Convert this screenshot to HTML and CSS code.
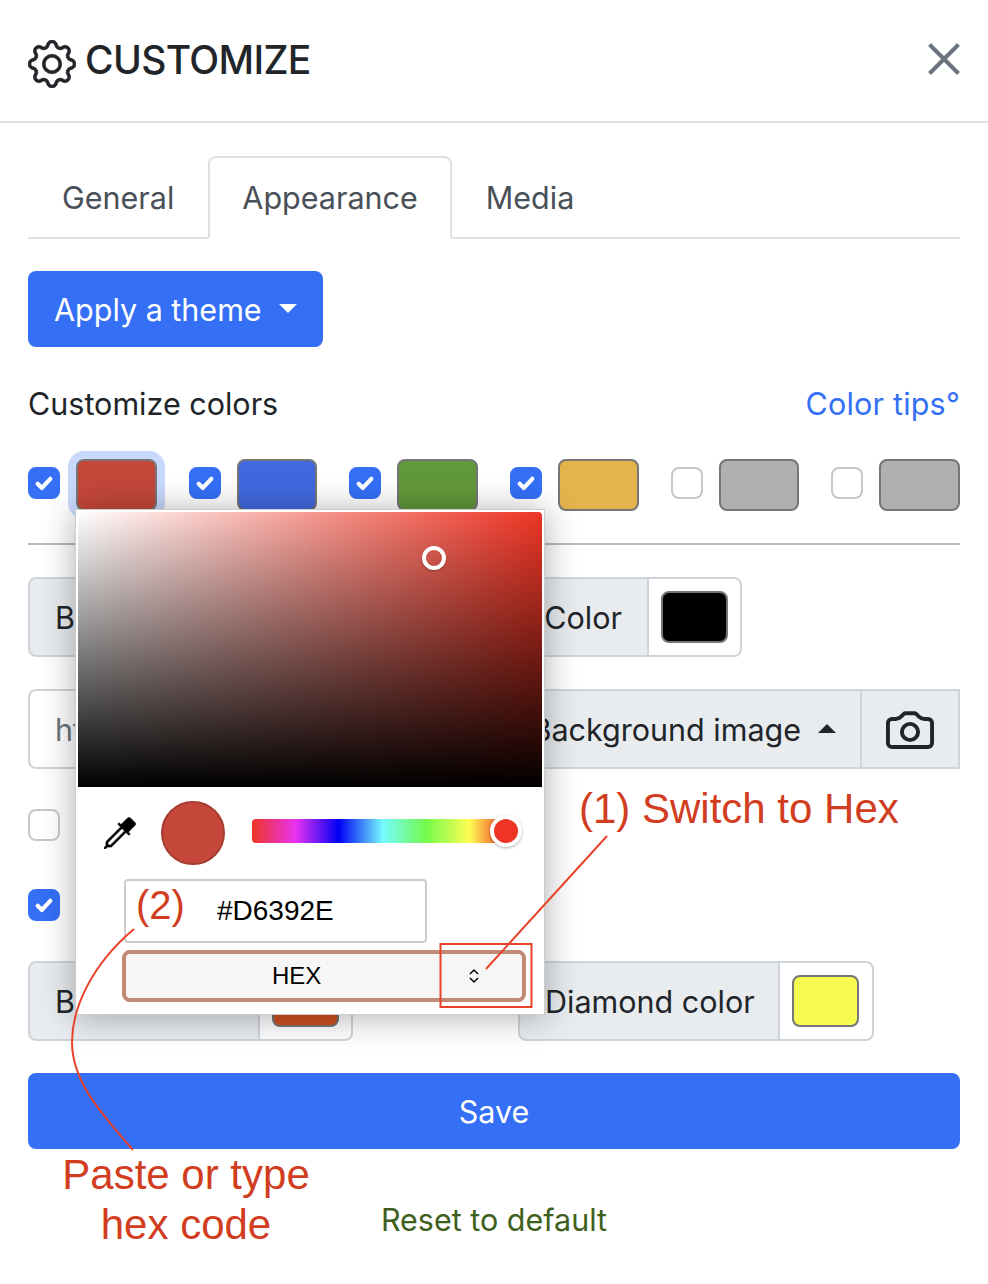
FILE: index.html
```html
<!DOCTYPE html>
<html lang="en">
<head>
  <meta charset="UTF-8" />
  <meta name="viewport" content="width=device-width, initial-scale=1.0"/>
  <title>Customize</title>
  <link rel="stylesheet" href="styles.css">
</head>
<body>
<div class="page">
  <header class="head">
    <svg class="gear" viewBox="0 0 16 16" fill="currentColor" stroke="currentColor" stroke-width="0.2">
      <path d="M8 4.754a3.246 3.246 0 1 0 0 6.492 3.246 3.246 0 0 0 0-6.492zM5.754 8a2.246 2.246 0 1 1 4.492 0 2.246 2.246 0 0 1-4.492 0z"/>
      <path d="M9.796 1.343c-.527-1.79-3.065-1.79-3.592 0l-.094.319a.873.873 0 0 1-1.255.52l-.292-.16c-1.64-.892-3.433.902-2.54 2.541l.159.292a.873.873 0 0 1-.52 1.255l-.319.094c-1.79.527-1.79 3.065 0 3.592l.319.094a.873.873 0 0 1 .52 1.255l-.16.292c-.892 1.64.901 3.434 2.541 2.54l.292-.159a.873.873 0 0 1 1.255.52l.094.319c.527 1.79 3.065 1.79 3.592 0l.094-.319a.873.873 0 0 1 1.255-.52l.292.16c1.64.893 3.434-.902 2.54-2.541l-.159-.292a.873.873 0 0 1 .52-1.255l.319-.094c1.79-.527 1.79-3.065 0-3.592l-.319-.094a.873.873 0 0 1-.52-1.255l.16-.292c.893-1.64-.902-3.433-2.541-2.54l-.292.159a.873.873 0 0 1-1.255-.52l-.094-.319zm-2.633.283c.246-.835 1.428-.835 1.674 0l.094.319a1.873 1.873 0 0 0 2.693 1.115l.291-.16c.764-.415 1.6.42 1.184 1.185l-.159.292a1.873 1.873 0 0 0 1.116 2.692l.318.094c.835.246.835 1.428 0 1.674l-.319.094a1.873 1.873 0 0 0-1.115 2.693l.16.291c.415.764-.42 1.6-1.185 1.184l-.291-.159a1.873 1.873 0 0 0-2.693 1.116l-.094.318c-.246.835-1.428.835-1.674 0l-.094-.319a1.873 1.873 0 0 0-2.692-1.115l-.292.16c-.764.415-1.6-.42-1.184-1.185l.159-.291A1.873 1.873 0 0 0 1.945 8.93l-.319-.094c-.835-.246-.835-1.428 0-1.674l.319-.094A1.873 1.873 0 0 0 3.06 4.377l-.16-.292c-.415-.764.42-1.6 1.185-1.184l.292.159a1.873 1.873 0 0 0 2.692-1.115l.094-.319z"/>
    </svg>
    <h1 class="title">CUSTOMIZE</h1>
    <svg class="close" viewBox="0 0 32 32"><path d="M1.5 1.5l29 29M30.500 1.500l-29 29"/></svg>
  </header>

  <main class="content">
    <nav class="tabs">
      <a class="tab">General</a>
      <a class="tab active">Appearance</a>
      <a class="tab">Media</a>
    </nav>

    <button class="btn theme-btn" type="button">Apply a theme<span class="caret"></span></button>

    <div class="colors-head">
      <span>Customize colors</span>
      <a class="tips">Color tips°</a>
    </div>

    <div class="swatch-row">
      <div class="swatch-item">
        <span class="check on"><svg viewBox="0 0 20 20"><path d="m5.500 10.500 3 3 6-6.500"/></svg></span>
        <span class="swatch focused red"></span>
      </div>
      <div class="swatch-item">
        <span class="check on"><svg viewBox="0 0 20 20"><path d="m5.500 10.500 3 3 6-6.500"/></svg></span>
        <span class="swatch blue"></span>
      </div>
      <div class="swatch-item">
        <span class="check on"><svg viewBox="0 0 20 20"><path d="m5.500 10.500 3 3 6-6.500"/></svg></span>
        <span class="swatch green"></span>
      </div>
      <div class="swatch-item">
        <span class="check on"><svg viewBox="0 0 20 20"><path d="m5.500 10.500 3 3 6-6.500"/></svg></span>
        <span class="swatch gold"></span>
      </div>
      <div class="swatch-item">
        <span class="check"></span>
        <span class="swatch grey"></span>
      </div>
      <div class="swatch-item">
        <span class="check"></span>
        <span class="swatch grey"></span>
      </div>
    </div>

    <hr class="rule">

    <div class="field-row first">
      <div class="color-group">
        <span class="group-label wide">Background</span>
        <span class="group-cell"><span class="swatch small white"></span></span>
      </div>
      <div class="color-group push">
        <span class="group-label">Text Color</span>
        <span class="group-cell"><span class="swatch small black"></span></span>
      </div>
    </div>

    <div class="image-row">
      <input class="image-input" type="text" value="https://example.com/image.jpg" readonly>
      <span class="group-label image-btn">Background image<span class="caret up"></span></span>
      <span class="group-label camera-btn">
        <svg class="camera" viewBox="0 0 16 16">
          <path d="M2 4.650h1.170a2.650 2.650 0 0 0 1.870-.780l.830-.830a1 1 0 0 1 .700-.290h2.860a1 1 0 0 1 .700.290l.830.830a2.650 2.650 0 0 0 1.870.780H14a1.350 1.350 0 0 1 1.350 1.350v6.650a1.350 1.350 0 0 1-1.350 1.350H2a1.350 1.350 0 0 1-1.350-1.350V6A1.350 1.350 0 0 1 2 4.650z"/>
          <circle cx="8" cy="9" r="2.700"/>
        </svg>
      </span>
    </div>

    <div class="check-row"><span class="check"></span></div>
    <div class="check-row second"><span class="check on"><svg viewBox="0 0 20 20"><path d="m5.500 10.500 3 3 6-6.500"/></svg></span></div>

    <div class="field-row last">
      <div class="color-group">
        <span class="group-label wide">Bars color</span>
        <span class="group-cell"><span class="swatch small orange"></span></span>
      </div>
      <div class="color-group diamond">
        <span class="group-label">Diamond color</span>
        <span class="group-cell"><span class="swatch small yellow"></span></span>
      </div>
    </div>

    <button class="btn save-btn" type="button">Save</button>
    <a class="reset">Reset to default</a>
  </main>

  <!-- colour picker popup -->
  <div class="picker">
    <div class="picker-area"><span class="picker-dot"></span></div>
    <div class="picker-controls">
      <svg class="dropper" viewBox="0 0 16 16" fill="currentColor" stroke="currentColor" stroke-width="0.35"><path d="M13.354.646a1.207 1.207 0 0 0-1.708 0L8.500 3.793l-.646-.647a.5.5 0 1 0-.708.708L8.293 5l-7.147 7.146A.5.5 0 0 0 1 12.500v1.793l-.854.853a.5.5 0 1 0 .708.707L1.707 15H3.500a.5.5 0 0 0 .354-.146L11 7.707l1.146 1.147a.5.5 0 0 0 .708-.708l-.647-.646 3.147-3.146a1.207 1.207 0 0 0 0-1.708l-2-2zM2 12.707l7-7L10.293 7l-7 7H2v-1.293z"/></svg>
      <span class="picked"></span>
      <div class="hue"><span class="hue-thumb"></span></div>
    </div>
    <input class="hex-input" type="text" value="#D6392E" readonly>
    <div class="format-select">
      <span>HEX</span>
      <svg class="updown" viewBox="0 0 12 16"><path d="M2 6l4-4 4 4M2 10l4 4 4-4"/></svg>
    </div>
  </div>

  <!-- red annotations on top of the screenshot -->
  <svg class="marks" viewBox="0 0 988 1284">
    <rect x="440.500" y="944" width="91" height="63"/>
    <path d="M607 836L486 969"/>
    <path d="M134 929C90 966 72 1010 72 1042C72 1080 98 1110 133 1150"/>
  </svg>
  <div class="note note-one">(1) Switch to Hex</div>
  <div class="note note-two">(2)</div>
  <div class="note note-paste">Paste or type<br>hex code</div>
</div>
</body>
</html>
```

FILE: styles.css
```css
* {
  box-sizing: border-box;
  margin: 0;
  padding: 0;
}

body {
  background: white;
  font-family: Inter, "Liberation Sans", sans-serif;
  color: #212529;
}

.page {
  position: relative;
  width: 988px;
  height: 1284px;
  overflow: hidden;
  font-size: 30.5px;
}

/* header */
.head {
  display: flex;
  align-items: center;
  height: 123px;
  padding: 0 28px 2px;
  border-bottom: 2px solid #dee2e6;
}

.gear {
  width: 48px;
  height: 48px;
  margin-top: 8px;
}

.title {
  margin-left: 9px;
  font-size: 39px;
  font-weight: 500;
  letter-spacing: -0.65px;
}

.close {
  width: 32px;
  height: 32px;
  margin: -2px 0 0 auto;
  fill: none;
  stroke: #6c757d;
  stroke-width: 4;
}

.content {
  padding: 0 28px;
}

/* tabs */
.tabs {
  display: flex;
  height: 83px;
  margin-top: 33px;
  border-bottom: 2px solid #dee2e6;
}

.tab {
  height: 83px;
  padding: 0 32px;
  line-height: 79px;
  color: #495057;
  border: 2px solid transparent;
  border-radius: 8px 8px 0 0;
}

.tab.active {
  background: white;
  border-color: #dee2e6 #dee2e6 white;
}

/* buttons */
.btn {
  display: block;
  height: 76px;
  color: white;
  background: #346ff6;
  border: none;
  border-radius: 8px;
  font: inherit;
}

.theme-btn {
  display: flex;
  align-items: center;
  margin-top: 32px;
  padding: 0 26px;
}

.caret {
  width: 0;
  height: 0;
  margin: -2px 0 0 17px;
  border-top: 9px solid white;
  border-left: 9px solid transparent;
  border-right: 9px solid transparent;
}

.caret.up {
  margin: -2px 0 0 17px;
  border-top: none;
  border-bottom: 9px solid #212529;
}

.save-btn {
  width: 100%;
  margin-top: 32px;
}

/* customize colors */
.colors-head {
  display: flex;
  justify-content: space-between;
  align-items: center;
  height: 46px;
  margin-top: 34px;
  padding-bottom: 2px;
}

.tips {
  color: #346ff6;
  letter-spacing: 0.2px;
}

.swatch-row {
  display: flex;
  justify-content: space-between;
  margin-top: 32px;
}

.swatch-item {
  display: flex;
  align-items: center;
  gap: 16px;
}

.swatch-item .check {
  margin-top: -4px;
}

.check {
  display: block;
  flex: none;
  width: 32px;
  height: 32px;
  background: white;
  border: 2px solid #c5c7c9;
  border-radius: 8px;
}

.check.on {
  background: #346ff6;
  border-color: #346ff6;
}

.check svg {
  display: block;
  width: 28px;
  height: 28px;
  fill: none;
  stroke: white;
  stroke-width: 3;
  stroke-linecap: round;
  stroke-linejoin: round;
}

.swatch {
  display: block;
  width: 80.6px;
  height: 52px;
  border: 2px solid #767676;
  border-radius: 8px;
}

.swatch.focused {
  box-shadow: 0 0 0 8px #c9d9fb;
}

.swatch.small {
  width: 67px;
}

.red { background: #c5473a; }
.blue { background: #4069e0; }
.green { background: #62983c; }
.gold { background: #e3b44c; }
.grey { background: #aeb1af; }
.white { background: white; }
.black { background: black; }
.orange { background: #d1501f; }
.yellow { background: #f7fb50; }

.rule {
  height: 2px;
  margin-top: 32px;
  background: #b9b9b9;
  border: none;
}

/* input groups */
.field-row {
  display: flex;
  height: 80px;
}

.field-row.first {
  margin-top: 32px;
}

.color-group {
  display: flex;
}

.color-group.push {
  margin-left: 94px;
}

.color-group.diamond {
  margin-left: 165px;
}

.color-group.diamond .group-label {
  padding-right: 23px;
}

.color-group.diamond .group-cell {
  width: 96px;
}

.group-label {
  display: flex;
  align-items: center;
  height: 80px;
  padding: 0 25px;
  background: #e9ecef;
  border: 2px solid #ced4da;
  white-space: nowrap;
}

.color-group .group-label {
  border-radius: 8px 0 0 8px;
}

.group-label.wide {
  width: 232px;
}

.group-cell {
  display: flex;
  align-items: center;
  justify-content: center;
  width: 95px;
  height: 80px;
  margin-left: -2px;
  border: 2px solid #ced4da;
  border-radius: 0 8px 8px 0;
}

.image-row {
  display: flex;
  margin-top: 32px;
}

.image-input {
  flex: 1;
  min-width: 0;
  height: 80px;
  padding: 0 25px;
  border: 2px solid #ced4da;
  border-radius: 8px 0 0 8px;
  font: inherit;
  color: #6c757d;
}

.image-btn {
  margin-left: -2px;
  padding-right: 24px;
}

.camera-btn {
  width: 100px;
  margin-left: -2px;
  padding: 0;
  justify-content: center;
}

.camera {
  width: 48px;
  height: 48px;
  fill: none;
  stroke: #212529;
  stroke-width: 1.300;
  stroke-linejoin: round;
}

.check-row {
  margin-top: 40px;
}

.check-row.second {
  margin-top: 48px;
}

.field-row.last {
  margin-top: 40px;
}

.reset {
  display: block;
  margin-top: 48px;
  line-height: 46px;
  text-align: center;
  color: #3f5f1c;
}

/* colour picker popup */
.picker {
  position: absolute;
  left: 75px;
  top: 509px;
  width: 470px;
  height: 506px;
  padding: 2px;
  background: white;
  border: 1px solid #ccc;
  box-shadow: 0 2px 32px rgba(0, 0, 0, 0.32);
  font-family: "Liberation Sans", Arial, sans-serif;
  color: black;
}

.picker-area {
  position: relative;
  height: 275px;
  border-radius: 4px 4px 0 0;
  background: linear-gradient(to top, #000, transparent), linear-gradient(to right, #fff, #ee3525);
}

.picker-dot {
  position: absolute;
  left: 344px;
  top: 34px;
  width: 24px;
  height: 24px;
  border: 4px solid white;
  border-radius: 50%;
  box-shadow: 0 1px 2px rgba(0, 0, 0, 0.3);
}

.picker-controls {
  display: flex;
  align-items: center;
  margin-top: 14px;
  padding-left: 26px;
}

.dropper {
  width: 32px;
  height: 32px;
}

.picked {
  width: 64px;
  height: 64px;
  margin-left: 25px;
  background: #c5473a;
  border: 2px solid #a53c30;
  border-radius: 50%;
}

.hue {
  position: relative;
  width: 262px;
  height: 24px;
  margin: -4px 0 0 27px;
  border-radius: 4px;
  background: linear-gradient(to right, #ee3525 0%, #ea33f0 16.500%, #0000f5 33%, #75fbfd 50%, #75fb4c 66.500%, #fffd54 83%, #ee3525 97%);
}

.hue-thumb {
  position: absolute;
  right: -8px;
  top: -4px;
  width: 32px;
  height: 32px;
  background: #ee3525;
  border: 4px solid white;
  border-radius: 50%;
  box-shadow: 0 1px 3px rgba(0, 0, 0, 0.3);
}

.hex-input {
  display: block;
  width: 303px;
  height: 64px;
  margin: 14px 0 0 46px;
  padding-left: 91px;
  border: 2px solid #ccc;
  border-radius: 4px;
  font: 28px "Liberation Sans", Arial, sans-serif;
  color: black;
}

.format-select {
  display: flex;
  align-items: center;
  justify-content: space-between;
  width: 404px;
  height: 52px;
  margin: 7px 0 0 44px;
  padding: 0 42px 0 146px;
  background: #f6f6f6;
  border: 4px solid #c08a74;
  border-radius: 8px;
  font-size: 24px;
}

.updown {
  width: 12px;
  height: 16px;
  fill: none;
  stroke: black;
  stroke-width: 1.500;
}

/* annotations */
.marks {
  position: absolute;
  left: 0;
  top: 0;
  width: 988px;
  height: 1284px;
  fill: none;
  stroke: #e8432a;
  stroke-width: 2;
  pointer-events: none;
}

.note {
  position: absolute;
  font: 42px/50px "Liberation Sans", Arial, sans-serif;
  color: #d13d20;
}

.note-one {
  left: 579px;
  top: 784px;
}

.note-two {
  left: 136px;
  top: 880px;
  font-size: 40px;
}

.note-paste {
  left: 36px;
  top: 1150px;
  width: 300px;
  text-align: center;
}
```
